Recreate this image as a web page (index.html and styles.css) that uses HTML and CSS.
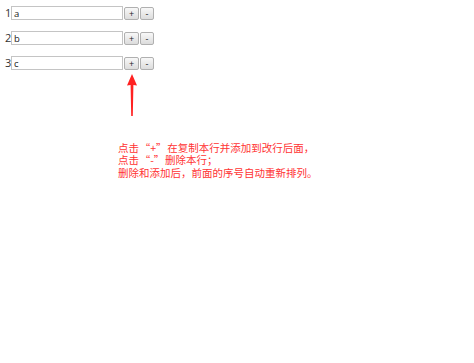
FILE: index.html
```html
<!DOCTYPE html>
<html lang="zh">
<head>
<meta charset="utf-8">
<link rel="stylesheet" href="styles.css">
</head>
<body>
<div class="page">
  <div class="rows">
    <div class="row"><span class="num">1</span><input class="field" type="text" value="a"><button class="btn">+</button><button class="btn btn-minus">-</button></div>
    <div class="row"><span class="num">2</span><input class="field" type="text" value="b"><button class="btn">+</button><button class="btn btn-minus">-</button></div>
    <div class="row"><span class="num">3</span><input class="field" type="text" value="c"><button class="btn">+</button><button class="btn btn-minus">-</button></div>
  </div>
  <svg class="arrow" width="12" height="43" viewBox="0 0 12 43">
    <path d="M6 0 L11 11.5 L7.4 11 L6.8 42 L5.2 42 L4.6 11 L1 11.5 Z" fill="#f22"/>
  </svg>
  <div class="note">
    <div class="line">点击&#8202;“+”&#8202;在复制本行并添加到改行后面，</div>
    <div class="line">点击&#8202;“-”&#8202;删除本行；</div>
    <div class="line">删除和添加后，前面的序号自动重新排列。</div>
  </div>
</div>
</body>
</html>
```
FILE: styles.css
```css
html, body {
  margin: 0;
  padding: 0;
  background: #fff;
}
.page {
  padding: 6px 0 0 5px;
}
.rows {
  display: flex;
  flex-direction: column;
  gap: 11px;
}
.row {
  display: flex;
  align-items: center;
  height: 14px;
}
.num {
  width: 6px;
  font-family: "Open Sans", "Noto Sans", sans-serif;
  font-size: 11px;
  line-height: 14px;
  color: #333;
}
.field {
  box-sizing: border-box;
  width: 112px;
  height: 14px;
  margin: 0;
  padding: 0 2px;
  border: 1px solid #c4c4c4;
  font-family: "Open Sans", "Noto Sans", sans-serif;
  font-size: 9.5px;
  color: #222;
  outline: none;
}
.btn {
  box-sizing: border-box;
  width: 15px;
  height: 13px;
  margin: 0 0 0 1px;
  padding: 0;
  border: 1px solid #b0b0b0;
  border-radius: 2px;
  background: linear-gradient(#f8f8f8, #dcdcdc);
  font-family: "Open Sans", "Noto Sans", sans-serif;
  font-size: 9px;
  line-height: 11px;
  color: #222;
}
.btn-minus {
  width: 14px;
}
.arrow {
  display: block;
  margin: 4px 0 0 121px;
}
.note {
  margin: 25px 0 0 113px;
  font-family: "Noto Sans CJK SC", "Noto Sans", sans-serif;
  font-size: 10.5px;
  color: #f33;
}
.line {
  height: 12.4px;
  line-height: 12.4px;
  white-space: nowrap;
}
```
